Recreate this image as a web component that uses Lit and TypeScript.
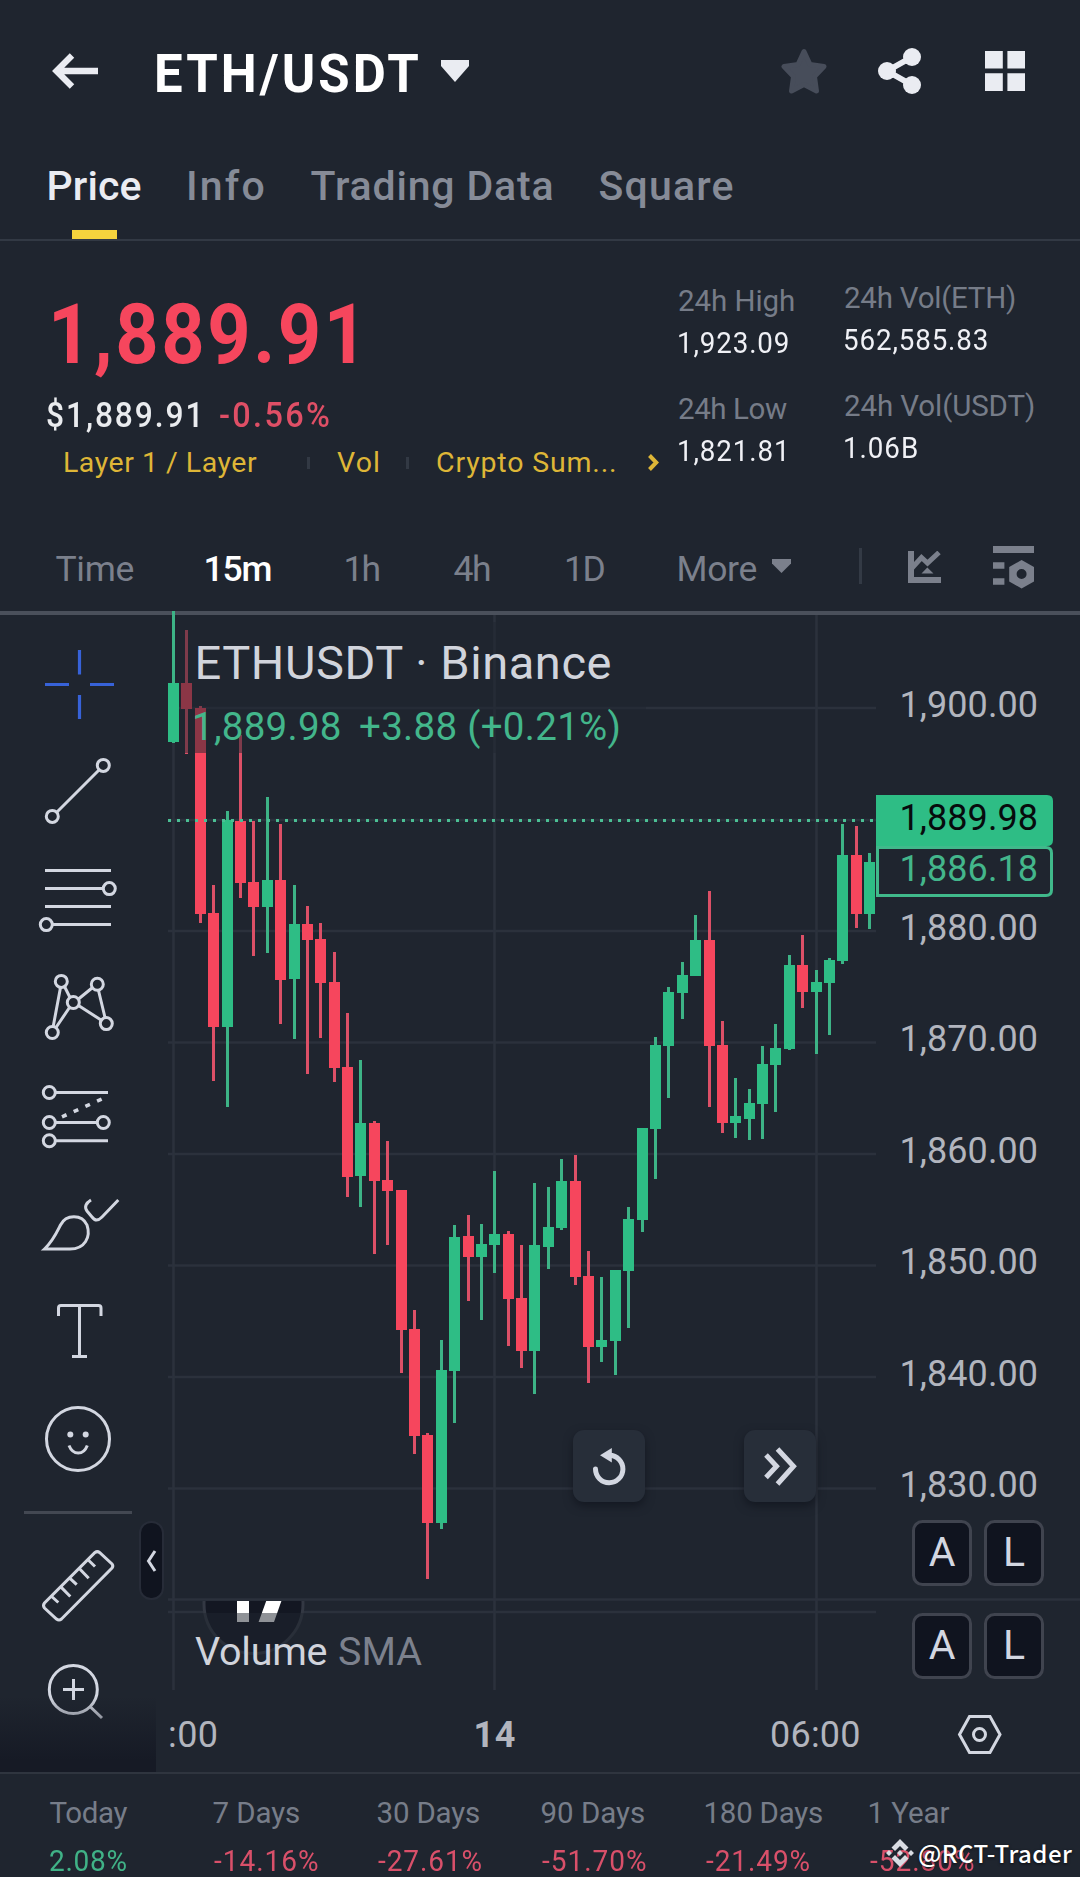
import { LitElement, html, svg, css } from "lit";
import { customElement, property, query } from "lit/decorators.js";

const UP = "#2ebd85";
const DOWN = "#f6465d";

/** Single line of text whose glyphs span exactly `w` pixels; `squeeze` condenses the glyphs themselves. */
@customElement("fit-text")
class FitText extends LitElement {
  @property() text = "";
  @property({ type: Number }) w = 0;
  @property({ type: Number }) squeeze = 1;
  @query("span") private label!: HTMLSpanElement;

  static styles = css`
    :host { display: block; flex: none; line-height: 1; white-space: pre; }
    span { display: inline-block; transform-origin: 0 50%; }
  `;

  updated() {
    const cs = getComputedStyle(this);
    const ctx = document.createElement("canvas").getContext("2d")!;
    ctx.font = `${cs.fontWeight} ${cs.fontSize} ${cs.fontFamily}`;
    const m = ctx.measureText(this.text);
    const ink = m.actualBoundingBoxLeft + m.actualBoundingBoxRight;
    const style = this.label.style;
    this.style.width = `${this.w}px`;
    style.letterSpacing = `${(this.w / this.squeeze - ink) / Math.max(1, this.text.length - 1)}px`;
    style.marginLeft = `${m.actualBoundingBoxLeft * this.squeeze}px`;
    if (this.squeeze !== 1) style.transform = `scaleX(${this.squeeze})`;
  }

  render() {
    return html`<span>${this.text}</span>`;
  }
}

/** Drawing tools: [row top, row height, artwork]. */
const ring = (x: number, y: number, r = 6) => svg`<circle cx=${x} cy=${y} r=${r} />`;
const TOOLS: [number, number, unknown][] = [
  [615, 113, svg`<path stroke="#3762d8" stroke-width="3.2" d="M45 684.5H69M90 684.5H114M79.5 650V674.5M79.5 695V719"/>`],
  [728, 114, svg`${ring(103.3, 765.4)}${ring(52.3, 816.4)}<path d="M57 812L99 770"/>`],
  [842, 108, svg`<path d="M45 870.4H111M45 888.6H103M45 906.4H111M52.5 924.6H111"/>${ring(109.3, 888.6)}${ring(46.3, 924.6)}`],
  [950, 110, svg`${ring(61.3, 981.4)}${ring(97.3, 984.3)}${ring(73.3, 1002.5)}${ring(52.3, 1032.5)}${ring(106.3, 1023.6)}<path d="M60.5 987.5L53.2 1026.5M64.5 986.5L70 997.5M56 1027.5L69.5 1007.5M78.5 999L92 988M98.5 990.5L105 1017.5M78.5 1005.5L101 1020"/>`],
  [1060, 108, svg`<path d="M55.5 1092.5H108M55.5 1122.5H97M55.5 1140.7H108"/><path stroke-width="3.6" stroke-dasharray="5 7.8" d="M62 1116.8L103.5 1098.3"/>${ring(49.3, 1092.5)}${ring(49.3, 1122.5)}${ring(49.3, 1140.7)}${ring(103.3, 1122.5)}`],
  [1168, 112, svg`<path d="M44.500 1249C53 1241 57 1232 60.500 1225C66 1214 82 1214 87 1225C91 1237 85 1249 70 1249ZM91 1200C86 1203 84 1207 87 1211L92 1217C95 1221 98 1221 102 1217L118.300 1200"/>`],
  [1280, 109, svg`<path d="M58.500 1316V1308Q58.500 1305.500 61 1305.500H98.500Q101 1305.500 101 1308V1316M79.500 1305.500V1356.500M72 1356.500H87"/>`],
  [1389, 122, svg`<circle cx="78" cy="1439" r="31.500"/><path d="M69 1445.500C73 1455.500 83.500 1455.500 87.300 1445.500"/><circle class="dot" cx="70.300" cy="1434.400" r="3"/><circle class="dot" cx="85.700" cy="1434.400" r="3"/>`],
  [1511, 125, svg`<path stroke="#434852" d="M24 1512.500H132"/><path d="M95 1552.500Q97.300 1550.700 99.500 1552.500L112 1564Q113.600 1566 112 1568L61.500 1619Q59 1621 56.500 1619L44.500 1608Q42.500 1605.600 44.500 1603ZM88.300 1560L95 1566.500M79.300 1568.500L88.700 1578.300M70 1578.300L76.700 1584.700M61.300 1587.400L70.300 1596.500M51.700 1596.500L58.300 1602.500"/>`],
  [1636, 136, svg`<circle cx="73.300" cy="1689.500" r="24"/><path d="M63 1689.500H84M73.500 1679V1700M90.500 1707L102 1718"/>`],
];

@customElement("tool-bar")
class ToolBar extends LitElement {
  static styles = css`
    :host { display: flex; flex-direction: column; width: 156px; flex: none; border-top: 4px solid #4a505b; position: relative; }
    svg { display: block; fill: none; stroke: #d3d7e1; stroke-width: 3; }
    .dot { fill: #d3d7e1; stroke: none; }
    .fade { position: absolute; left: 0; right: 0; bottom: 0; height: 76px; background: linear-gradient(rgba(22, 26, 37, 0), #161a25 85%); }
  `;
  render() {
    return html`
      ${TOOLS.map(([y, h, art]) => html`<svg width="156" height=${h} viewBox="0 ${y} 156 ${h}">${art}</svg>`)}
      <div class="fade"></div>`;
  }
}

/** Candles: [direction, high, body top, body bottom, low] in plot units. */
type Candle = [0 | 1, number, number, number, number];
const CANDLES: Candle[] = [
  [1, 611, 683, 742, 743], [0, 630, 683, 709, 754], [0, 706, 708, 914, 923], [0, 885, 913, 1027, 1081],
  [1, 811, 820, 1027, 1107], [0, 735, 821, 883, 898], [0, 821, 882, 907, 956], [1, 797, 880, 907, 953],
  [0, 824, 880, 980, 1024], [1, 885, 924, 979, 1039], [0, 906, 924, 940, 1074], [0, 923, 939, 983, 1038],
  [0, 952, 982, 1068, 1082], [0, 1013, 1067, 1177, 1197], [1, 1060, 1123, 1176, 1207], [0, 1121, 1123, 1181, 1254],
  [0, 1141, 1180, 1191, 1245], [0, 1190, 1190, 1330, 1373], [0, 1310, 1329, 1436, 1454], [0, 1433, 1435, 1523, 1579],
  [1, 1340, 1370, 1523, 1529], [1, 1225, 1237, 1371, 1423], [0, 1215, 1236, 1257, 1301], [1, 1224, 1244, 1257, 1320],
  [1, 1171, 1234, 1245, 1273], [0, 1231, 1234, 1299, 1346], [0, 1245, 1298, 1351, 1368], [1, 1183, 1245, 1351, 1394],
  [1, 1187, 1227, 1247, 1269], [1, 1159, 1181, 1228, 1230], [0, 1155, 1181, 1277, 1285], [0, 1251, 1276, 1347, 1383],
  [1, 1277, 1340, 1347, 1362], [1, 1270, 1270, 1341, 1375], [1, 1207, 1219, 1271, 1328], [1, 1128, 1128, 1220, 1232],
  [1, 1037, 1045, 1129, 1179], [1, 987, 992, 1046, 1098], [1, 962, 975, 993, 1019], [1, 915, 940, 976, 976],
  [0, 891, 940, 1046, 1107], [0, 1021, 1045, 1123, 1133], [1, 1078, 1116, 1123, 1138], [1, 1089, 1103, 1119, 1140],
  [1, 1046, 1064, 1104, 1139], [1, 1024, 1048, 1065, 1112], [1, 955, 965, 1049, 1050], [0, 935, 965, 992, 1008],
  [1, 970, 982, 992, 1054], [1, 958, 960, 983, 1035], [1, 824, 855, 961, 964], [0, 826, 855, 914, 928],
  [1, 853, 862, 914, 929],
];
const PRICE_LABELS: [string, number][] = [
  ["1,900.00", 704], ["1,880.00", 927], ["1,870.00", 1038], ["1,860.00", 1150],
  ["1,850.00", 1261.5], ["1,840.00", 1373], ["1,830.00", 1484.5],
];
const H_GRID = [708, 820, 931, 1042.500, 1154, 1265.500, 1377, 1488.500, 1612];
const V_GRID = [173.500, 494.500, 816.500];

@customElement("price-chart")
class PriceChart extends LitElement {
  static styles = css`
    :host { display: block; flex: none; width: 924px; }
    svg { display: block; font-family: Roboto, "Liberation Sans", sans-serif; }
    .grid { stroke: #2b313c; stroke-width: 2.6; }
    .axis { font-size: 36px; fill: #b2b5be; }
    .key { fill: #10141f; stroke: #40444f; stroke-width: 3; }
    .keytext { font-size: 41px; fill: #d3d7e1; text-anchor: middle; }
    .fab { fill: #272e39; filter: drop-shadow(0 4px 5px rgba(12, 15, 24, 0.6)); }
    .icon { fill: none; stroke: #d3d7e1; stroke-width: 5; }
    .thin { fill: none; stroke: #d3d7e1; stroke-width: 3; }
    .bold { font-weight: 700; }
  `;

  private candle([dir, high, top, bottom, low]: Candle, i: number) {
    const c = Math.round(173.1 + i * 13.385) + 0.5;
    return svg`
      <rect x=${c - 1.5} y=${high} width="3" height=${low - high} fill=${dir ? "#3db386" : "#dc5067"} />
      <rect x=${c - 5.5} y=${top} width="11" height=${bottom - top} fill=${dir ? UP : DOWN} />`;
  }

  private key(letter: string, x: number, y: number) {
    return svg`
      <rect class="key" x=${x + 1.5} y=${y + 1.5} width="57" height="63" rx="9" />
      <text class="keytext" x=${x + 30} y=${y + 46}>${letter}</text>`;
  }

  render() {
    return html`
      <svg width="924" height="1161" viewBox="156 611 924 1161">
        <rect x="156" y="611" width="924" height="4" fill="#4a505b" />
        <g class="grid">
          ${H_GRID.map((y) => svg`<path d="M168 ${y}H876" />`)}
          ${V_GRID.map((x) => svg`<path d="M${x} 615V1690" />`)}
          <path d="M168 1599.500H1080" />
        </g>
        ${CANDLES.map((c, i) => this.candle(c, i))}
        <path d="M168 820.500H876" stroke="#4bbf94" stroke-width="3" stroke-dasharray="3 6" />

        <rect x="180" y="622" width="466" height="131" fill="#1f252f" fill-opacity="0.5" />
        <text x="194.500" y="679" font-size="47" fill="#d1d4dc" textLength="417" lengthAdjust="spacing">ETHUSDT · Binance</text>
        <g font-size="38.500" fill="#43b68b">
          <text x="192" y="739.700" textLength="149.500">1,889.98</text>
          <text x="359" y="739.700" textLength="262">+3.88 (+0.21%)</text>
        </g>

        <g class="axis">
          ${PRICE_LABELS.map(([t, y]) => svg`<text x="899.500" y=${y + 12.8} textLength="138.500">${t}</text>`)}
        </g>
        <path d="M876 795H1047Q1053 795 1053 801V840Q1053 846 1047 846H876Z" fill=${UP} />
        <path d="M877.500 847.500H1046Q1051.500 847.500 1051.500 853V890Q1051.500 895.500 1046 895.500H877.500Z" fill="#1f252f" stroke="#40b98b" stroke-width="3" />
        <g font-size="36">
          <text x="899.500" y="830" textLength="138.500" fill="#070b0d">1,889.98</text>
          <text x="899.500" y="881" textLength="138.500" fill="#43b68b">1,886.18</text>
        </g>

        ${this.key("A", 912, 1520)}${this.key("L", 984, 1520)}
        ${this.key("A", 912, 1613)}${this.key("L", 984, 1613)}

        <rect class="fab" x="573" y="1430" width="72" height="72" rx="11" />
        <path class="icon" stroke-linecap="round" d="M595.500 1469A13.700 13.700 0 1 0 609.500 1455.300" />
        <path d="M600 1455.300L611.800 1448V1462.500Z" fill="#d3d7e1" />
        <rect class="fab" x="744" y="1430" width="72" height="72" rx="11" />
        <path class="icon" d="M766 1455L776.500 1466.200L766 1477.500M777.500 1449L793.500 1466.200L777.500 1484" />

        <clipPath id="pane"><rect x="190" y="1601" width="130" height="60" /></clipPath>
        <g clip-path="url(#pane)">
          <circle cx="253.500" cy="1604" r="49.500" fill="#131722" stroke="#333843" stroke-width="3" />
          <path d="M237 1601H249V1622H237ZM266.200 1601H281.400L274 1622H258.600Z" fill="#fff" />
          <rect x="190" y="1613" width="130" height="60" fill="#1f252f" fill-opacity="0.5" />
        </g>
        <text x="195" y="1665" font-size="39.500" fill="#d1d4dc" textLength="132.500">Volume</text>
        <text x="338" y="1665" font-size="39.500" fill="#7c818d" textLength="84">SMA</text>

        <g class="axis">
          <text x="168" y="1747" textLength="50">:00</text>
          <text class="bold" x="473.500" y="1747" textLength="42">14</text>
          <text x="770" y="1747" textLength="90.500">06:00</text>
        </g>
        <path class="thin" d="M959.500 1734.500L969.500 1716.500H990L1000 1734.500L990 1752.500H969.500Z" />
        <circle class="thin" cx="979.500" cy="1734.500" r="6" />
      </svg>`;
  }
}

const TABS: [string, number][] = [["Price", 92], ["Info", 74.5], ["Trading Data", 242], ["Square", 133]];
const STATS: [string, number, string, number][][] = [
  [["24h High", 115, "1,923.09", 109], ["24h Low", 108, "1,821.81", 105.5]],
  [["24h Vol(ETH)", 170, "562,585.83", 142], ["24h Vol(USDT)", 189, "1.06B", 72]],
];
const PERIODS: [string, number, string, number][] = [
  ["Today", 78, "2.08%", 76.5], ["7 Days", 85.5, "-14.16%", 104], ["30 Days", 101.500, "-27.61%", 103.5],
  ["90 Days", 102.5, "-51.70%", 104], ["180 Days", 116.5, "-21.49%", 103.5], ["1 Year", 80, "-52.80%", 104],
];

@customElement("app-root")
class AppRoot extends LitElement {
  static styles = css`
    :host { display: flex; flex-direction: column; width: 1080px; height: 1877px; overflow: hidden; background: #1f252f; color: #eaecef; font-family: Roboto, "Liberation Sans", sans-serif; position: relative; }
    svg { display: block; flex: none; }
    .header { height: 142px; flex: none; display: flex; align-items: center; box-sizing: border-box; padding: 0 55px 0 52px; }
    .title { font-size: 53px; font-weight: 700; color: #fff; margin: 6px 23px 0 59px; }
    .actions { display: flex; align-items: center; margin-left: auto; }
    .share { margin: 0 64px 0 51px; }
    .tabs { height: 97px; flex: none; display: flex; gap: 47px; padding-left: 48.5px; border-bottom: 2px solid #323944; font-size: 41px; font-weight: 500; color: #868b97; }
    .tab { display: flex; flex-direction: column; align-items: center; justify-content: space-between; padding-top: 24px; }
    .tab:nth-child(2) { padding-left: 1.5px; }
    .tab.on { color: #eaecf2; }
    .tab.on::after { content: ""; width: 45px; height: 9px; background: #f5d33d; }
    .summary { height: 286px; flex: none; display: flex; }
    .quote { width: 679px; flex: none; }
    .last { font-size: 84px; font-weight: 700; color: #f6465d; padding: 52px 0 0 53px; }
    .sub { display: flex; gap: 23px; font-size: 34.5px; font-weight: 500; padding: 21px 0 0 46.5px; }
    .chg { color: #df4f66; }
    .tags { display: flex; align-items: center; font-size: 28.5px; color: #deb637; padding: 16px 0 0 65px; }
    .bar { width: 3px; height: 12px; background: #323944; }
    .b1 { margin: 0 27px 0 50px; }
    .b2 { margin: 0 28px; }
    .arr { margin-left: 33px; }
    .stats { width: 166px; flex: none; padding-top: 46px; font-size: 29.5px; box-sizing: border-box; }
    .stats + .stats { padding-top: 43px; }
    .stat { height: 108px; color: #767c88; display: flex; flex-direction: column; gap: 12px; }
    .val { color: #f0f1f6; }
    .intervals { height: 84px; flex: none; display: flex; align-items: center; font-size: 35.5px; color: #7b808c; box-sizing: border-box; padding: 2px 0 0 55.5px; }
    .i15 { margin-left: 72px; font-weight: 500; color: #fff; }
    .i1h { margin-left: 75px; }
    .i4h { margin-left: 74px; }
    .i1d { margin-left: 76px; }
    .more { margin-left: 74px; }
    .dropdown { margin: -9px 0 0 15px; }
    .divider { width: 3px; height: 36px; margin: -8px 46.5px 0 68px; background: #333a45; }
    .indicator { margin: -7px 51.5px 0 0; }
    .setup { margin-top: -6px; }
    .chart { display: flex; height: 1161px; flex: none; position: relative; }
    .collapse { position: absolute; left: 139px; top: 910px; }
    .periods { border-top: 2px solid #2f353f; display: grid; grid-template-columns: repeat(6, 164px); padding: 25px 0 0 49.5px; font-size: 29.5px; color: #777d89; }
    .period { display: flex; flex-direction: column; gap: 18px; }
    .down { color: #d9506a; }
    .up { color: #40b287; }
    .mark { position: absolute; left: 886px; top: 1838.5px; display: flex; align-items: center; gap: 5px; font: 500 24px "Noto Sans CJK SC", "Noto Sans", sans-serif; color: #fff; text-shadow: 0 1px 3px rgba(0, 0, 0, 0.7); }
  `;

  render() {
    return html`
      <div class="header">
        <svg width="46" height="36" viewBox="0 0 46 36" fill="none" stroke="#eaecf2" stroke-width="6.3"><path d="M46 18H6M20 2.500L4.500 18L20 33.500" /></svg>
        <fit-text class="title" w="261" text="ETH/USDT" squeeze="0.96"></fit-text>
        <svg width="28" height="22" viewBox="0 0 28 22" fill="#eaecf2"><path d="M0 0H28V6L14 22L0 6Z" /></svg>
        <div class="actions">
          <svg width="46" height="46" viewBox="0 0 46 46" fill="#474d5a" stroke="#474d5a" stroke-width="5" stroke-linejoin="round"><path d="M23 3.500L29 16.500L43 18.500L33.500 28.500L35.500 43L23 36.500L10.500 43L12.500 28.500L3 18.500L17 16.500Z" /></svg>
          <svg class="share" width="43" height="46" viewBox="0 0 43 46" fill="#eaecf2"><path d="M9 23L34 9M9 23L34 37" stroke="#eaecf2" stroke-width="6" /><circle cx="9" cy="23" r="9" /><circle cx="34" cy="9" r="9" /><circle cx="34" cy="37" r="9" /></svg>
          <svg width="40" height="40" viewBox="0 0 40 40" fill="#eaecf2"><path d="M0 0H17.800V17.500H0ZM22.400 0H40V17.500H22.400ZM0 22.300H17.800V40H0ZM22.400 22.300H40V40H22.400Z" /></svg>
        </div>
      </div>
      <div class="tabs">
        ${TABS.map(([t, w], i) => html`<div class="tab ${i ? "" : "on"}"><fit-text w=${w} text=${t}></fit-text></div>`)}
      </div>
      <div class="summary">
        <div class="quote">
          <fit-text class="last" w="300" squeeze="0.9" text="1,889.91"></fit-text>
          <div class="sub">
            <fit-text w="150.5" squeeze="0.92" text="$1,889.91"></fit-text>
            <fit-text class="chg" w="108.5" squeeze="0.94" text="-0.56%"></fit-text>
          </div>
          <div class="tags">
            <fit-text w="192" text="Layer 1 / Layer"></fit-text><div class="bar b1"></div>
            <fit-text w="41" text="Vol"></fit-text><div class="bar b2"></div>
            <fit-text w="178" text="Crypto Sum..."></fit-text>
            <svg class="arr" width="11" height="17" viewBox="0 0 11 17" fill="none" stroke="#deb637" stroke-width="4"><path d="M1.500 1.500L8.300 8.500L1.500 15.500" /></svg>
          </div>
        </div>
        ${STATS.map((col) => html`<div class="stats">
          ${col.map(([l, lw, v, vw]) => html`<div class="stat"><fit-text w=${lw} text=${l}></fit-text><fit-text class="val" w=${vw} squeeze="0.94" text=${v}></fit-text></div>`)}
        </div>`)}
      </div>
      <div class="intervals">
        <fit-text w="78" text="Time"></fit-text>
        <fit-text class="i15" w="65" text="15m"></fit-text>
        <fit-text class="i1h" w="34" text="1h"></fit-text>
        <fit-text class="i4h" w="36.500" text="4h"></fit-text>
        <fit-text class="i1d" w="38.500" text="1D"></fit-text>
        <fit-text class="more" w="78" text="More"></fit-text>
        <svg class="dropdown" width="19" height="14" viewBox="0 0 19 14" fill="#7b808c"><path d="M0 0H19V4.500L9.500 14L0 4.500Z" /></svg>
        <div class="divider"></div>
        <svg class="indicator" width="33" height="32" viewBox="0 0 33 32" fill="#7b808c"><path d="M0 0H6V26H33V32H0ZM19.300 16.500L25.500 22.500H13.500Z" /><path d="M4 17L13.500 6.500L19.500 12L31 1.500" fill="none" stroke="#7b808c" stroke-width="5" /></svg>
        <svg class="setup" width="41" height="43" viewBox="0 0 41 43" fill="#7b808c"><path fill-rule="evenodd" d="M0 0H41V7H0ZM0 16.300H11.400V22.700H0ZM0 32.300H11.400V38.700H0ZM28.600 14L41 21V35.500L28.600 42.500L16.200 35.500V21ZM28.600 23A5 5 0 1 0 28.600 33A5 5 0 1 0 28.600 23Z" /></svg>
      </div>
      <div class="chart">
        <tool-bar></tool-bar>
        <price-chart></price-chart>
        <svg class="collapse" width="25" height="79" viewBox="0 0 25 79" fill="none"><rect x="1" y="1" width="23" height="77" rx="11" fill="#10141f" stroke="#272c38" stroke-width="2" /><path d="M16 30L9.500 40L16 50" stroke="#d3d7e1" stroke-width="3" /></svg>
      </div>
      <div class="periods">
        ${PERIODS.map(([l, lw, v, vw], i) => html`<div class="period"><fit-text w=${lw} text=${l}></fit-text><fit-text class=${i ? "down" : "up"} w=${vw} squeeze="0.95" text=${v}></fit-text></div>`)}
      </div>
      <div class="mark">
        <svg width="28" height="28" viewBox="0 0 28 28" fill="#d9dce3"><path d="M14 0L22.500 8.500L19 12L14 7L9 12L5.500 8.500ZM14 28L5.500 19.500L9 16L14 21L19 16L22.500 19.500ZM14 11L17 14L14 17L11 14ZM3 11L6 14L3 17L0 14ZM25 11L28 14L25 17L22 14Z" /></svg>
        <fit-text w="153" text="@RCT-Trader"></fit-text>
      </div>`;
  }
}
